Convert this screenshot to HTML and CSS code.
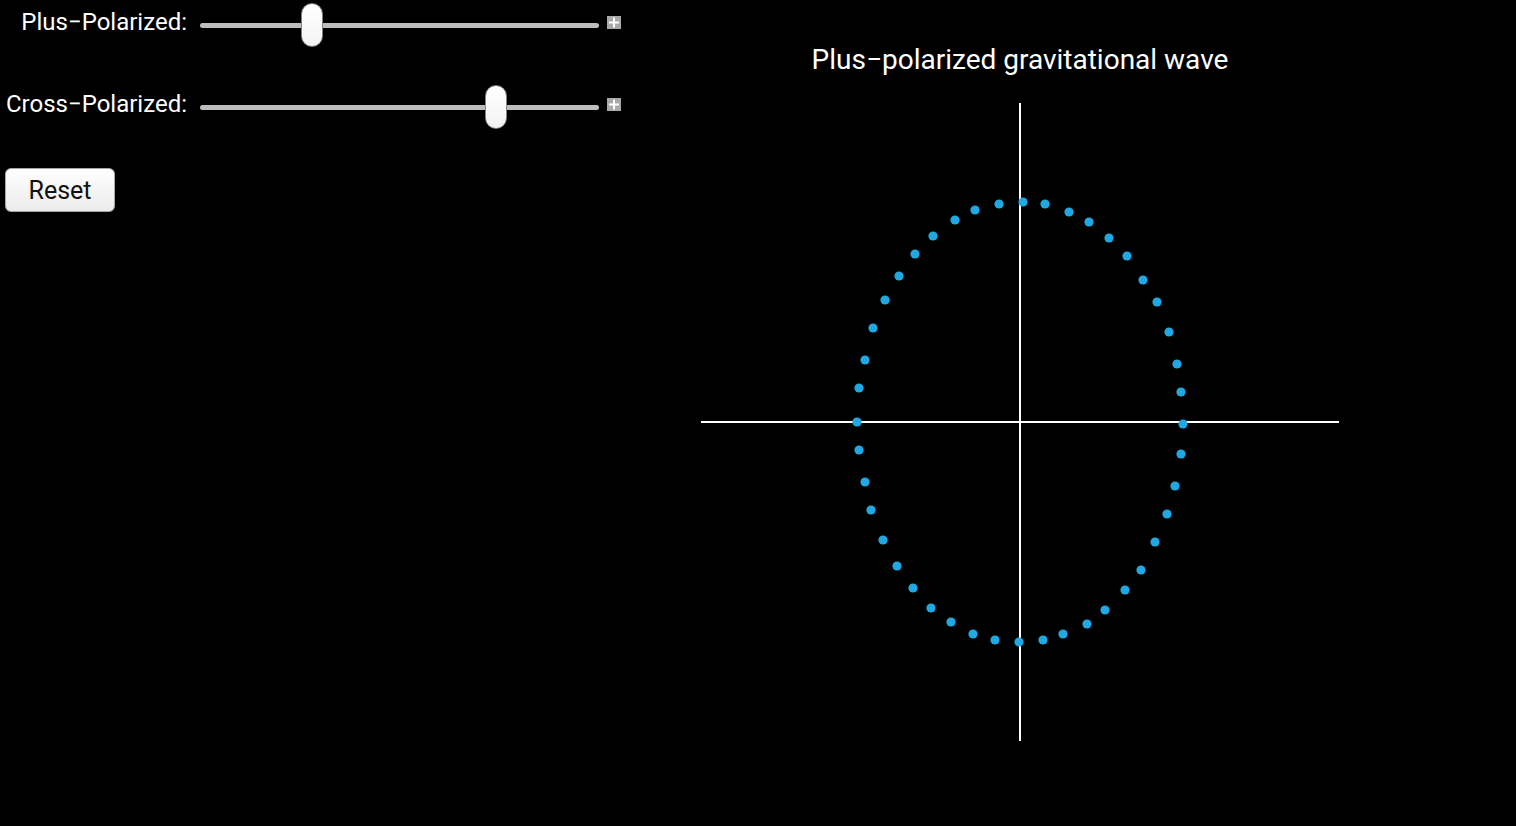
FILE: index.html
```html
<!DOCTYPE html>
<html lang="en">
<head>
<meta charset="utf-8">
<title>Plus-polarized gravitational wave</title>
<link rel="stylesheet" href="styles.css">
</head>
<body>
<div class="page">
  <div class="controls">
    <div class="row">
      <label class="label" for="plus">Plus−Polarized:</label>
      <input class="slider" id="plus" type="range" min="0" max="1000" value="269">
      <span class="more"><svg viewBox="0 0 14 13" width="14" height="13"><rect x="2" y="5.5" width="10" height="2" fill="#fff"/><rect x="6" y="1.5" width="2" height="10" fill="#fff"/></svg></span>
    </div>
    <div class="row">
      <label class="label" for="cross">Cross−Polarized:</label>
      <input class="slider" id="cross" type="range" min="0" max="1000" value="757">
      <span class="more"><svg viewBox="0 0 14 13" width="14" height="13"><rect x="2" y="5.5" width="10" height="2" fill="#fff"/><rect x="6" y="1.5" width="2" height="10" fill="#fff"/></svg></span>
    </div>
    <button class="reset" type="button">Reset</button>
  </div>
  <div class="plot">
    <div class="title">Plus−polarized gravitational wave</div>
    <svg class="chart" viewBox="701 103 638 638" width="638" height="638">
      <line x1="701" y1="422" x2="1339" y2="422" stroke="#fff" stroke-width="2"/>
      <line x1="1020" y1="103" x2="1020" y2="741" stroke="#fff" stroke-width="2"/>
      <g fill="#1fa8e2">
        <circle cx="1023" cy="202" r="4.6"/>
        <circle cx="1045" cy="204" r="4.6"/>
        <circle cx="1069" cy="212" r="4.6"/>
        <circle cx="1089" cy="222" r="4.6"/>
        <circle cx="1109" cy="238" r="4.6"/>
        <circle cx="1127" cy="256" r="4.6"/>
        <circle cx="1143" cy="280" r="4.6"/>
        <circle cx="1157" cy="302" r="4.6"/>
        <circle cx="1169" cy="332" r="4.6"/>
        <circle cx="1177" cy="364" r="4.6"/>
        <circle cx="1181" cy="392" r="4.6"/>
        <circle cx="1183" cy="424" r="4.6"/>
        <circle cx="1181" cy="454" r="4.6"/>
        <circle cx="1175" cy="486" r="4.6"/>
        <circle cx="1167" cy="514" r="4.6"/>
        <circle cx="1155" cy="542" r="4.6"/>
        <circle cx="1141" cy="570" r="4.6"/>
        <circle cx="1125" cy="590" r="4.6"/>
        <circle cx="1105" cy="610" r="4.6"/>
        <circle cx="1087" cy="624" r="4.6"/>
        <circle cx="1063" cy="634" r="4.6"/>
        <circle cx="1043" cy="640" r="4.6"/>
        <circle cx="1019" cy="642" r="4.6"/>
        <circle cx="995" cy="640" r="4.6"/>
        <circle cx="973" cy="634" r="4.6"/>
        <circle cx="951" cy="622" r="4.6"/>
        <circle cx="931" cy="608" r="4.6"/>
        <circle cx="913" cy="588" r="4.6"/>
        <circle cx="897" cy="566" r="4.6"/>
        <circle cx="883" cy="540" r="4.6"/>
        <circle cx="871" cy="510" r="4.6"/>
        <circle cx="865" cy="482" r="4.6"/>
        <circle cx="859" cy="450" r="4.6"/>
        <circle cx="857" cy="422" r="4.6"/>
        <circle cx="859" cy="388" r="4.6"/>
        <circle cx="865" cy="360" r="4.6"/>
        <circle cx="873" cy="328" r="4.6"/>
        <circle cx="885" cy="300" r="4.6"/>
        <circle cx="899" cy="276" r="4.6"/>
        <circle cx="915" cy="254" r="4.6"/>
        <circle cx="933" cy="236" r="4.6"/>
        <circle cx="955" cy="220" r="4.6"/>
        <circle cx="975" cy="210" r="4.6"/>
        <circle cx="999" cy="204" r="4.6"/>
      </g>
    </svg>
  </div>
</div>
</body>
</html>
```

FILE: styles.css
```css
html, body {
  margin: 0;
  padding: 0;
  background: #000;
  height: 100%;
}

body {
  font-family: Roboto, "Liberation Sans", sans-serif;
  color: #fff;
  overflow: hidden;
}

.page {
  display: flex;
  align-items: flex-start;
}

.controls {
  width: 701px;
  flex: none;
  padding-top: 3px;
  display: flex;
  flex-direction: column;
  align-items: flex-start;
}

.row {
  display: flex;
  align-items: flex-start;
  height: 44px;
  margin-bottom: 38px;
}

.label {
  width: 187px;
  text-align: right;
  font-size: 24px;
  line-height: 28px;
  margin-top: 5px;
  color: #fff;
  white-space: nowrap;
}

.slider {
  -webkit-appearance: none;
  appearance: none;
  width: 399px;
  height: 44px;
  margin: 0 0 0 13px;
  padding: 0;
  background: transparent;
  outline: none;
}

.slider::-webkit-slider-runnable-track {
  height: 5px;
  border-radius: 3px;
  background: #bdbdbd;
}

.slider::-webkit-slider-thumb {
  -webkit-appearance: none;
  appearance: none;
  box-sizing: border-box;
  width: 22px;
  height: 44px;
  margin-top: -19.5px;
  border-radius: 11px;
  border: 1.5px solid #828282;
  background: linear-gradient(#ffffff, #f3f3f3);
}

.more {
  display: block;
  width: 14px;
  height: 13px;
  margin: 13px 0 0 8px;
  background: #a9a9a9;
}

.more svg {
  display: block;
}

.reset {
  box-sizing: border-box;
  width: 110px;
  height: 44px;
  margin: 1px 0 0 5px;
  padding: 0;
  border: 1px solid #a6a6a6;
  border-radius: 6px;
  background: linear-gradient(#ffffff, #ebebeb);
  font-family: Roboto, "Liberation Sans", sans-serif;
  font-size: 25px;
  color: #111;
}

.plot {
  width: 638px;
  flex: none;
  padding-top: 44px;
  display: flex;
  flex-direction: column;
  align-items: center;
}

.title {
  font-size: 28px;
  line-height: 32px;
  height: 32px;
  margin-bottom: 27px;
  white-space: nowrap;
}

.chart {
  display: block;
}
```
